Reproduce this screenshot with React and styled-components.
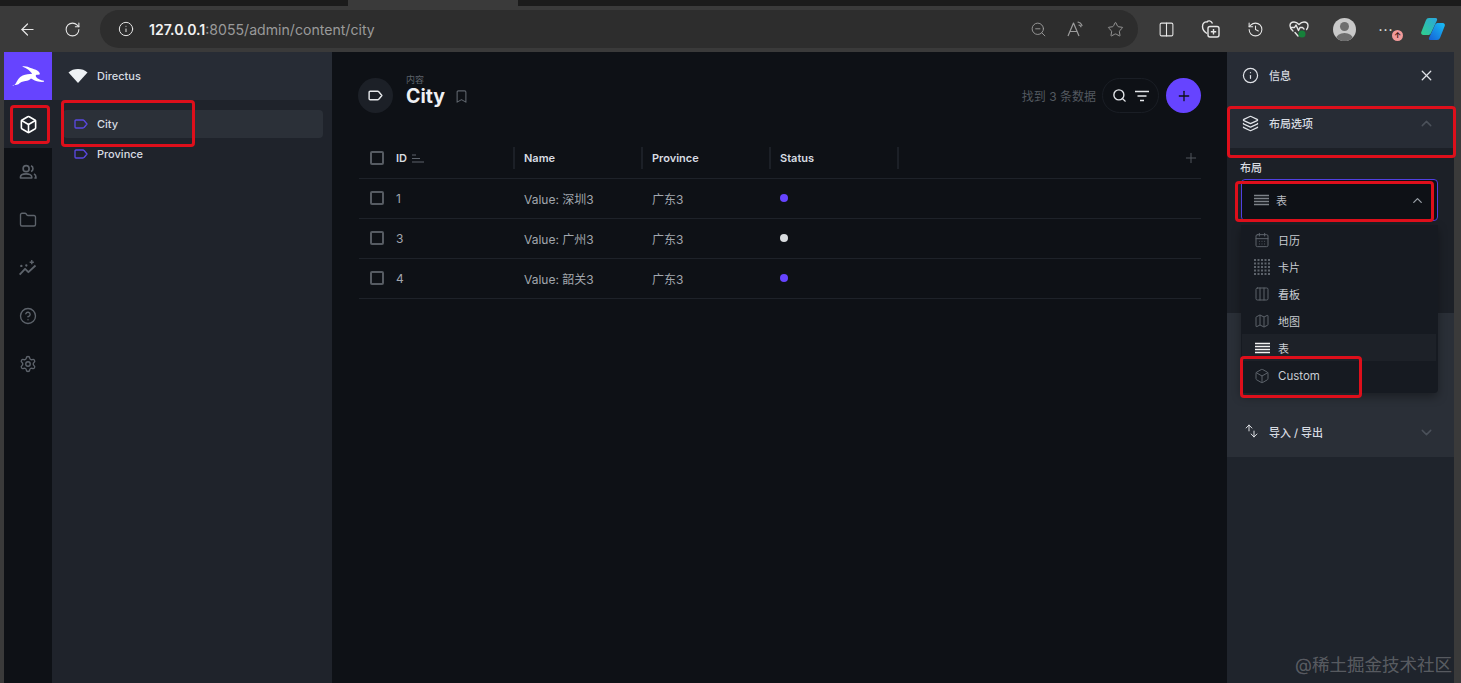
import React from "react";
import styled, { createGlobalStyle } from "styled-components";
import {
  ArrowLeft, RotateCw, Info, ZoomOut, Star, Columns2, History, X, ChevronUp, ChevronDown,
  Layers, Plus, Search, Bookmark, CalendarDays, Columns3, Map as MapIcon, Box, CircleHelp, Settings, Folder,
  ArrowUp, ArrowDown,
} from "lucide-react";

const Global = createGlobalStyle`
  html, body { margin: 0; padding: 0; background: #1f232b; }
  * { box-sizing: border-box; }
  body { font-family: Inter, "Noto Sans CJK SC", sans-serif; }
`;

const Page = styled.div`
  position: relative; width: 1461px; height: 683px; overflow: hidden;
  display: flex; flex-direction: column; background: #3a3a3a;
`;
const TabStrip = styled.div`display: flex; height: 6px; background: #1b1b1b;`;
const TabGap = styled.div`width: 170px; margin-left: 348px; background: #3a3a3a;`;
const Toolbar = styled.div`
  height: 46px; display: flex; align-items: center; background: #3a3a3a; color: #e6e6e6;
`;
const ToolSlot = styled.div`
  width: ${p => p.$w}px; flex: none; display: flex; justify-content: center; align-items: center; position: relative;
`;
const UrlBar = styled.div`
  width: 1038px; height: 38px; flex: none; margin: 0 5px 0 11px; border-radius: 19px; background: #2d2d2d;
  display: flex; align-items: center; padding: 0 14px 0 18px;
`;
const Url = styled.div`
  flex: 1; margin-left: 15px; font-size: 14.100px; color: #9a9a9a; white-space: nowrap;
  b { color: #f2f2f2; font-weight: 600; }
`;
const UrlIcons = styled.div`display: flex; gap: 20px; color: #9c9c9c; align-items: center;`;
const Avatar = styled.div`
  width: 23px; height: 23px; border-radius: 50%; background: #c9c9c9; position: relative; overflow: hidden;
  &::before { content: ""; position: absolute; left: 7px; top: 4px; width: 9px; height: 9px; border-radius: 50%; background: #6e6e6e; }
  &::after { content: ""; position: absolute; left: 3px; top: 15px; width: 17px; height: 12px; border-radius: 50%; background: #6e6e6e; }
`;
const Dots = styled.span`font-size: 14px; color: #eee; letter-spacing: 1px; line-height: 1; margin: -6px 8px 0 0;`;
const UpdateBadge = styled.span`
  position: absolute; left: 25px; top: 5px; width: 11px; height: 11px; border-radius: 50%; background: #f29a9a;
  color: #3a1414; font-size: 8px; line-height: 11px; text-align: center; font-weight: 700;
`;
const Body = styled.div`flex: 1; display: flex; padding: 0 7px 0 4px; min-height: 0;`;

const ModuleBar = styled.nav`width: 48px; flex: none; background: #0e1116; display: flex; flex-direction: column;`;
const Logo = styled.div`height: 48px; background: #6644ff; display: flex; align-items: center; justify-content: center;`;
const ModuleItem = styled.div`
  height: 48px; display: flex; align-items: center; justify-content: center;
  color: ${p => (p.$active ? "#fff" : "#5d636b")}; background: ${p => (p.$active ? "#1f232b" : "transparent")};
`;

const NavPanel = styled.aside`width: 280px; flex: none; background: #1f232b; display: flex; flex-direction: column;`;
const NavHead = styled.div`
  height: 48px; background: #272c35; display: flex; align-items: center; padding: 0 0 0 16px; gap: 9px;
  font-size: 11px; font-weight: 500; color: #d8dce2;
`;
const NavList = styled.div`padding: 10px 9px 0 11px; display: flex; flex-direction: column; gap: 2px;`;
const NavRow = styled.div`
  height: 28px; display: flex; align-items: center; gap: 8px; padding-left: 10px; border-radius: 4px;
  font-size: 11px; font-weight: 500; color: #d8dce2; background: ${p => (p.$active ? "#2b3038" : "transparent")};
`;

const Main = styled.main`flex: 1; min-width: 0; background: #0e1116; padding: 26px 26px 0 26px; display: flex; flex-direction: column;`;
const Header = styled.header`height: 35px; display: flex; align-items: center;`;
const TitleIcon = styled.div`
  width: 35px; height: 35px; border-radius: 50%; background: #1c2027; display: flex; align-items: center; justify-content: center;
`;
const TitleBlock = styled.div`margin: -9px 0 0 13px; display: flex; flex-direction: column;`;
const Crumb = styled.span`font-size: 9px; line-height: 11px; color: #5d636b;`;
const Title = styled.span`font-size: 19.500px; line-height: 23px; font-weight: 700; color: #eef0f3;`;
const BookmarkWrap = styled.span`margin: 1px 0 0 9px; color: #5d636b; display: flex;`;
const Spacer = styled.div`flex: 1;`;
const Count = styled.span`font-size: 12px; margin-top: -1px; color: #535960; margin-right: 6px;`;
const ActionPill = styled.div`
  width: 57px; height: 35px; border: 1px solid #1a1e25; border-radius: 18px; display: flex; align-items: center;
  justify-content: center; gap: 7px; color: #e4e6ea; margin-right: 7px;
`;
const FilterGlyph = styled.svg`width: 16px; height: 16px;`;
const AddButton = styled.div`
  width: 35px; height: 35px; border-radius: 50%; background: #6644ff; display: flex; align-items: center; justify-content: center; color: #0e1116;
`;

const Table = styled.div`margin: 25px 0 0 1px; display: flex; flex-direction: column;`;
const Row = styled.div`
  display: grid; grid-template-columns: 156px 128px 128px 128px 1fr; height: ${p => (p.$head ? "41px" : "40px")};
  border-bottom: 1px solid #1e2229; align-items: center;
`;
const Cell = styled.div`
  display: flex; align-items: center; height: ${p => (p.$head ? "22px" : "100%")}; padding: 0 0 ${p => (p.$head ? 0 : 1)}px 9px;
  font-size: ${p => (p.$head ? "11px" : "12px")}; font-weight: ${p => (p.$head ? 600 : 400)};
  color: ${p => (p.$head ? "#d8dce2" : "#a2a7ae")}; border-right: ${p => (p.$sep ? "2px solid #1c2027" : "none")};
  justify-content: ${p => (p.$end ? "flex-end" : "flex-start")};
`;
const IdCell = styled(Cell)`padding-left: 11px; gap: 12px;`;
const Check = styled.span`width: 14px; height: 14px; border: 2px solid #565b62; border-radius: 2px; flex: none;`;
const SortGlyph = styled.svg`width: 12px; height: 9px; margin-left: -7px;`;
const Dot = styled.span`width: 8px; height: 8px; border-radius: 50%; background: ${p => p.$color};`;
const AddCol = styled.span`color: #50565d; display: flex; margin-right: 2px;`;

const Side = styled.aside`width: 227px; flex: none; background: #1f242c; display: flex; flex-direction: column; color: #e0e3e8;`;
const SideRow = styled.div`
  height: 48px; display: flex; align-items: center; padding: 0 19px 2px 15px; gap: 10px; font-size: 11px; font-weight: 500;
  background: ${p => p.$bg || "#272c35"};
`;
const SideLabel = styled.span`flex: 1; color: #d8dce2;`;
const Faint = styled.span`color: #4b515a; display: flex;`;
const LayoutBody = styled.div`height: 165px; background: #1c2027; padding: 13px 16px 0 13px;`;
const FieldLabel = styled.div`font-size: 11px; line-height: 14px; color: #d8dce2; font-weight: 500;`;
const Select = styled.div`
  margin: 4px 0 0 1px; height: 42px; background: #0e1116; border: 1px solid #5040e0; border-radius: 4px;
  display: flex; align-items: center; padding: 0 12px; gap: 7px; font-size: 11px; color: #b8bcc2;
`;
const SelectText = styled.span`flex: 1; margin-top: -1px;`;
const LinesGlyph = styled.svg`width: 15px; height: 12px; flex: none;`;
const LowerBlock = styled.div`height: 144px; background: #2a2f37; display: flex; flex-direction: column; justify-content: flex-end;`;
const Arrows = styled.span`display: flex; color: #eef0f3; width: 17px; margin-left: 0; padding-left: 2px;`;

const Dropdown = styled.div`
  position: absolute; left: 1241px; top: 225px; width: 197px; height: 168px; background: #161a21; border-radius: 0 0 4px 4px;
  box-shadow: 0 4px 10px rgba(0,0,0,.35); padding-top: 1px;
`;
const Option = styled.div`
  height: ${p => (p.$last ? 29 : 27)}px; display: flex; align-items: center; padding-left: ${p => (p.$active ? 12 : 13)}px; gap: 8px;
  font-size: ${p => (p.$last ? 11.500 : 11)}px; color: #c9cdd3;
  background: ${p => (p.$active ? "#1d2128" : "transparent")}; margin: ${p => (p.$active ? "0 2px 0 1px" : "0")};
  svg { color: ${p => (p.$active ? "#f2f2f2" : "#5d636b")}; }
`;
const OptionIcon = styled.span`width: 16px; flex: none; display: flex; justify-content: center;`;
const Annotation = styled.div`
  position: absolute; border: 3px solid #de0f1b; border-radius: 4px;
  left: ${p => p.$x}px; top: ${p => p.$y}px; width: ${p => p.$w}px; height: ${p => p.$h}px;
`;
const Watermark = styled.div`
  position: absolute; right: 9px; top: 654px; font-size: 17.500px; line-height: 22px; color: rgba(255,255,255,.27);
  white-space: nowrap;
`;

const Tag = ({ color, size = 16, w = 2 }) => (
  <svg width={size} height={size} viewBox="0 0 24 24" fill="none" stroke={color} strokeWidth={w} strokeLinejoin="round">
    <path d="M3 7.500A1.500 1.500 0 0 1 4.500 6H15a2 2 0 0 1 1.600.8L21 12l-4.400 5.200A2 2 0 0 1 15 18H4.500A1.500 1.500 0 0 1 3 16.500z" />
  </svg>
);
const Rabbit = () => (
  <svg width="32" height="22" viewBox="0 0 30 20" fill="#fff">
    <path d="M0 19.500c1.500-.5 2.500-1 3.500-2.500C5 14.500 6.500 11 10 9.500c3-1.200 6-1 9-1.500-1.500-2.500-5-5.500-9.500-7 3.500-.5 6 .4 8 1.600 2 .8 4.500 1.400 6.500 2.400 1.300.6 2 2 2.200 3.300-1 .6-2 .5-3 .6-1 .2-1.200 1-.6 2 1.200 1.800 3.900 2.800 7.400 3.600.3.400.3.800-.3 1-3.200.2-6.200-.3-8.900-1.500-1.200-.6-2.100-1.300-3-1.600-1.200 1.300-3 2.200-5.300 2.400-2.800.3-4.700 1.300-6.500 3-1.300.7-3 .9-4.500.6z" />
  </svg>
);
const Wifi = () => (
  <svg width="20" height="16" viewBox="0 0 20 16" fill="#eef2f5">
    <path d="M0.500 4.500C3 2 6.300 1 10 1s7 1 9.500 3.500L10 15z" />
  </svg>
);
const Copilot = () => (
  <svg width="26" height="26" viewBox="0 0 26 26">
    <defs>
      <linearGradient id="copA" x1="0" y1="1" x2="1" y2="0">
        <stop offset="0" stopColor="#2fd08a" /><stop offset="1" stopColor="#2aa6e0" />
      </linearGradient>
      <linearGradient id="copB" x1="0" y1="1" x2="1" y2="0">
        <stop offset="0" stopColor="#1560d8" /><stop offset="1" stopColor="#18c0f5" />
      </linearGradient>
    </defs>
    <path d="M9 2h6.500c1.600 0 2 1.300 1.400 2.600L11 17c-.7 1.400-1.700 2-3 2H3.500C1.500 19 .7 17.500 1.300 16L5.800 4.500C6.500 2.800 7.500 2 9 2z" fill="url(#copA)" />
    <path d="M17 24h-6.500c-1.500 0-2-1.300-1.300-2.600L15 9c.7-1.400 1.700-2 3-2h4.500c2 0 2.800 1.500 2.200 3L20.200 21.500C19.500 23.200 18.500 24 17 24z" fill="url(#copB)" />
  </svg>
);
const Collections = () => (
  <svg width="20" height="20" viewBox="0 0 20 20" fill="none" stroke="currentColor" strokeWidth="1.400" strokeLinejoin="round">
    <path d="M6 14.500C3.500 13 1.500 11 1.500 7.500 1.500 4 4 2.500 6 3c1-1.500 4-2 5.500 1.500" />
    <rect x="7" y="7.500" width="11" height="10.500" rx="2" />
    <path d="M12.500 10v5.500M9.800 12.750h5.400" />
  </svg>
);
const HealthPulse = () => (
  <svg width="20" height="20" viewBox="0 0 20 20" fill="none" stroke="currentColor" strokeWidth="1.400" strokeLinejoin="round" strokeLinecap="round">
    <path d="M4 12C1.800 10 1 8.500 1 6.800 1 4.500 2.800 3 5 3c2 0 3.500.9 5 2.500C11.500 3.900 13 3 15 3c2.200 0 4 1.500 4 3.800 0 1.700-.5 2.600-1.400 3.700" />
    <path d="M2 8.500h3.500L7 6l2.500 5.500L11 8.500h2.500L15 10" />
    <path d="M6 13.500l3 3.500" />
    <circle cx="13" cy="15" r="3.500" fill="#16803a" stroke="none" />
  </svg>
);
const ReadAloud = () => (
  <svg width="20" height="18" viewBox="0 0 20 18" fill="none" stroke="currentColor" strokeWidth="1.200" strokeLinejoin="round">
    <path d="M1 16L6.500 3 12 16M3 11.500h7" />
    <path d="M11 2c2 .4 3.300 1.600 4 3.500M12 5c1 .2 1.600.8 2 1.800" strokeLinecap="round" />
  </svg>
);
const UsersGlyph = () => (
  <svg width="18" height="18" viewBox="0 0 24 24" fill="none" stroke="currentColor" strokeWidth="2.200">
    <circle cx="9.500" cy="7.500" r="4" />
    <path d="M2 20v-1.500c0-2.500 3.500-4 7.500-4s7.500 1.500 7.500 4V20z" strokeLinejoin="round" />
    <path d="M16 3.800a4 4 0 0 1 0 7.500" />
    <path d="M20 14.500c1.500.8 2.500 2 2.500 4V20h-2" />
  </svg>
);
const InsightsGlyph = () => (
  <svg width="20" height="20" viewBox="0 0 24 24" fill="none" stroke="currentColor" strokeWidth="2.200" strokeLinejoin="round">
    <path d="M2 20l6.500-7 4 4L21 9" />
    <path d="M4 9.500h.01M10 9h.01" strokeLinecap="round" strokeWidth="2.800" />
    <path d="M16.500 2.500v5M14 5h5" strokeWidth="1.700" />
  </svg>
);
const Lines = ({ color = "#7d8288" }) => (
  <LinesGlyph viewBox="0 0 15 12" stroke={color} strokeWidth="1.300">
    <path d="M0 1.500h15M0 4.500h15M0 7.500h15M0 10.500h15" />
  </LinesGlyph>
);
const GridDots = () => (
  <svg width="16" height="16" viewBox="0 0 16 16" fill="currentColor">
    {[1, 4.500, 8, 11.500, 15].flatMap(y => [1, 4.500, 8, 11.500, 15].map(x => <rect key={`${x}-${y}`} x={x - 1} y={y - 1} width="2" height="2" />))}
  </svg>
);

const rows = [
  { id: 1, name: "Value: 深圳3", color: "#6644ff" },
  { id: 3, name: "Value: 广州3", color: "#d9dcdf" },
  { id: 4, name: "Value: 韶关3", color: "#6644ff" },
];

export default function App() {
  return (
    <Page>
      <Global />
      <TabStrip><TabGap /></TabStrip>
      <Toolbar>
        <ToolSlot $w={55}><ArrowLeft size={19} strokeWidth={1.500} /></ToolSlot>
        <ToolSlot $w={34}><RotateCw size={17} strokeWidth={1.500} /></ToolSlot>
        <UrlBar>
          <Info size={16} strokeWidth={1.500} color="#e6e6e6" />
          <Url><b>127.0.0.1</b>:8055/admin/content/city</Url>
          <UrlIcons>
            <ZoomOut size={17} strokeWidth={1.300} />
            <ReadAloud />
            <Star size={17} strokeWidth={1.300} />
          </UrlIcons>
        </UrlBar>
        <ToolSlot $w={46}><Columns2 size={17} strokeWidth={1.500} /></ToolSlot>
        <ToolSlot $w={44}><Collections /></ToolSlot>
        <ToolSlot $w={44}><History size={17} strokeWidth={1.500} /></ToolSlot>
        <ToolSlot $w={44}><HealthPulse /></ToolSlot>
        <ToolSlot $w={46}><Avatar /></ToolSlot>
        <ToolSlot $w={46}><Dots>...</Dots><UpdateBadge>↑</UpdateBadge></ToolSlot>
        <ToolSlot $w={40}><Copilot /></ToolSlot>
      </Toolbar>
      <Body>
        <ModuleBar>
          <Logo><Rabbit /></Logo>
          <ModuleItem $active><Box size={19} strokeWidth={2} /></ModuleItem>
          <ModuleItem><UsersGlyph /></ModuleItem>
          <ModuleItem><Folder size={18} strokeWidth={1.800} /></ModuleItem>
          <ModuleItem><InsightsGlyph /></ModuleItem>
          <ModuleItem><CircleHelp size={18} strokeWidth={1.800} /></ModuleItem>
          <ModuleItem><Settings size={18} strokeWidth={1.800} /></ModuleItem>
        </ModuleBar>
        <NavPanel>
          <NavHead><Wifi />Directus</NavHead>
          <NavList>
            <NavRow $active><Tag color="#5a48e0" />City</NavRow>
            <NavRow><Tag color="#5a48e0" />Province</NavRow>
          </NavList>
        </NavPanel>
        <Main>
          <Header>
            <TitleIcon><Tag color="#e6e8eb" size={17} /></TitleIcon>
            <TitleBlock><Crumb>内容</Crumb><Title>City</Title></TitleBlock>
            <BookmarkWrap><Bookmark size={15} strokeWidth={1.800} /></BookmarkWrap>
            <Spacer />
            <Count>找到 3 条数据</Count>
            <ActionPill>
              <Search size={15} strokeWidth={2.200} />
              <FilterGlyph viewBox="0 0 16 16" stroke="currentColor" strokeWidth="1.600">
                <path d="M1 3.500h14M3.500 8h9M6 12.500h4" />
              </FilterGlyph>
            </ActionPill>
            <AddButton><Plus size={16} strokeWidth={2} /></AddButton>
          </Header>
          <Table>
            <Row $head>
              <IdCell $head $sep>
                <Check />ID
                <SortGlyph viewBox="0 0 12 9" stroke="#5d636b" strokeWidth="1.100"><path d="M0 1h4M0 4.500h8M0 8h12" /></SortGlyph>
              </IdCell>
              <Cell $head $sep>Name</Cell>
              <Cell $head $sep>Province</Cell>
              <Cell $head $sep>Status</Cell>
              <Cell $head $end><AddCol><Plus size={16} strokeWidth={1.500} /></AddCol></Cell>
            </Row>
            {rows.map(r => (
              <Row key={r.id}>
                <IdCell><Check />{r.id}</IdCell>
                <Cell>{r.name}</Cell>
                <Cell>广东3</Cell>
                <Cell><Dot $color={r.color} /></Cell>
                <Cell />
              </Row>
            ))}
          </Table>
        </Main>
        <Side>
          <SideRow>
            <Info size={17} strokeWidth={1.700} />
            <SideLabel>信息</SideLabel>
            <X size={17} strokeWidth={1.800} />
          </SideRow>
          <SideRow>
            <Layers size={17} strokeWidth={1.800} />
            <SideLabel>布局选项</SideLabel>
            <Faint><ChevronUp size={17} /></Faint>
          </SideRow>
          <LayoutBody>
            <FieldLabel>布局</FieldLabel>
            <Select>
              <Lines />
              <SelectText>表</SelectText>
              <ChevronUp size={15} color="#9aa0a7" />
            </Select>
          </LayoutBody>
          <LowerBlock>
            <SideRow $bg="#2a2f37">
              <Arrows>
                <ArrowUp size={12} strokeWidth={2.200} style={{ marginRight: -5, marginTop: -2 }} />
                <ArrowDown size={12} strokeWidth={2.200} style={{ marginTop: 4 }} />
              </Arrows>
              <SideLabel>导入 / 导出</SideLabel>
              <Faint><ChevronDown size={17} /></Faint>
            </SideRow>
          </LowerBlock>
        </Side>
      </Body>
      <Dropdown>
        <Option><OptionIcon><CalendarDays size={16} strokeWidth={1.500} /></OptionIcon>日历</Option>
        <Option><OptionIcon><GridDots /></OptionIcon>卡片</Option>
        <Option><OptionIcon><Columns3 size={16} strokeWidth={1.500} /></OptionIcon>看板</Option>
        <Option><OptionIcon><MapIcon size={16} strokeWidth={1.500} /></OptionIcon>地图</Option>
        <Option $active><OptionIcon><Lines color="#f2f2f2" /></OptionIcon>表</Option>
        <Option $last><OptionIcon><Box size={18} strokeWidth={1.500} /></OptionIcon>Custom</Option>
      </Dropdown>
      <Annotation $x={10} $y={105} $w={40} $h={39} />
      <Annotation $x={61} $y={100} $w={134} $h={47} />
      <Annotation $x={1227} $y={106} $w={229} $h={52} />
      <Annotation $x={1235} $y={181} $w={199} $h={41} />
      <Annotation $x={1240} $y={356} $w={122} $h={42} />
      <Watermark>@稀土掘金技术社区</Watermark>
    </Page>
  );
}
